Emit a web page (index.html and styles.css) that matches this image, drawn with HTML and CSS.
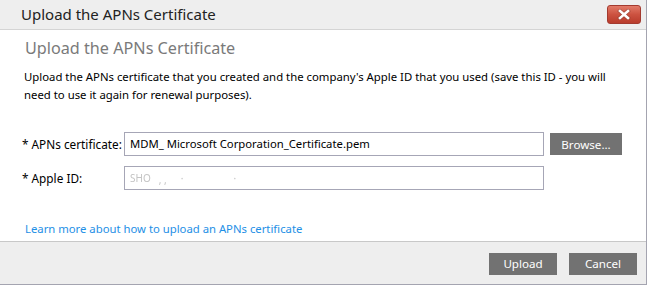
FILE: index.html
```html
<!DOCTYPE html>
<html lang="en">
<head>
    <meta charset="UTF-8">
    <title>Upload the APNs Certificate</title>
    <link rel="stylesheet" href="styles.css">
</head>
<body>
    <div class="dialog">
        <div class="titlebar">
            <span class="title">Upload the APNs Certificate</span>
            <span class="close-btn">
                <svg width="14" height="11" viewBox="0 0 14 11">
                    <path d="M3 2 L11 9 M11 2 L3 9" stroke="#7a3a30" stroke-width="4" stroke-linecap="square" opacity="0.5"/>
                    <path d="M3 2 L11 9 M11 2 L3 9" stroke="#fff" stroke-width="2.6" stroke-linecap="square"/>
                </svg>
            </span>
        </div>

        <div class="content">
            <h2>Upload the APNs Certificate</h2>
            <p class="intro">Upload the APNs certificate that you created and the company's Apple ID that you used (save this ID - you will need to use it again for renewal purposes).</p>

            <div class="form">
                <div class="row">
                    <label>* APNs certificate:</label>
                    <div class="field">MDM_ Microsoft Corporation_Certificate.pem</div>
                    <span class="btn">Browse...</span>
                </div>
                <div class="row">
                    <label>* Apple ID:</label>
                    <div class="field redacted"><span>SHO</span><span class="lo">, ,</span><span class="gap">·</span><span class="gap2">·</span></div>
                </div>
            </div>

            <a class="learn-link" href="#">Learn more about how to upload an APNs certificate</a>
        </div>

        <div class="footer">
            <span class="btn wide">Upload</span>
            <span class="btn wide">Cancel</span>
        </div>
    </div>
</body>
</html>
```

FILE: styles.css
```css
body {
    margin: 0;
    background: #fff;
    font-family: 'Noto Sans', 'Open Sans', sans-serif;
    color: #000;
}

.dialog {
    width: 647px;
    height: 285px;
    border-right: 1px solid #a4a4b0;
    border-bottom: 1px solid #a4a4b0;
    display: flex;
    flex-direction: column;
    box-sizing: border-box;
}

.titlebar {
    height: 30px;
    background: #eeeeee;
    border-bottom: 1px solid #d4d4d4;
    box-sizing: border-box;
    display: flex;
    align-items: flex-start;
    justify-content: space-between;
    padding: 0 5px 0 21px;
}

.title {
    font-size: 15px;
    line-height: 28px;
    color: #222;
}

.close-btn {
    width: 34px;
    height: 19px;
    box-sizing: border-box;
    border: 1px solid #a33a2f;
    border-radius: 3px;
    background: linear-gradient(#e27a68, #cc5240 50%, #b93c2c);
    display: flex;
    align-items: center;
    justify-content: center;
    margin-top: 5px;
}

.content {
    flex: 1;
    padding: 6px 0 0 25px;
}

h2 {
    margin: 0;
    font-weight: normal;
    font-size: 16.2px;
    color: #7a7a7a;
    line-height: 24px;
}

.intro {
    margin: 8px 0 0 -1px;
    font-size: 11.35px;
    line-height: 18px;
    width: 600px;
}

.form {
    margin: 28px 0 0 -3px;
    display: flex;
    flex-direction: column;
    gap: 10px;
}

.row {
    display: flex;
    align-items: center;
    font-size: 11.8px;
}

.row label {
    width: 102px;
}

.field {
    width: 420px;
    height: 24px;
    box-sizing: border-box;
    border: 1px solid #a6a6b6;
    padding: 0 5px;
    line-height: 22px;
    font-size: 11.3px;
}

.redacted {
    color: #c4c4c4;
    font-size: 10px;
    filter: blur(0.4px);
    display: flex;
}

.redacted .lo {
    padding: 6px 0 0 8px;
    line-height: 14px;
}

.redacted .gap {
    margin-left: 14px;
}

.redacted .gap2 {
    margin-left: 50px;
}

.btn {
    background: #727272;
    color: #fff;
    font-size: 11.6px;
    display: inline-flex;
    align-items: center;
    justify-content: center;
    height: 22px;
    width: 72px;
    margin-left: 6px;
}

.btn.wide {
    width: 68px;
    margin-left: 0;
}

.learn-link {
    display: block;
    margin: 31px 0 0 0;
    font-size: 11.3px;
    color: #1e8fe6;
    text-decoration: none;
    line-height: 16px;
}

.footer {
    height: 43px;
    background: #eeeeee;
    border-top: 1px solid #c8c8c8;
    box-sizing: border-box;
    display: flex;
    align-items: center;
    justify-content: flex-end;
    gap: 12px;
    padding: 1px 9px 0 0;
}
```
